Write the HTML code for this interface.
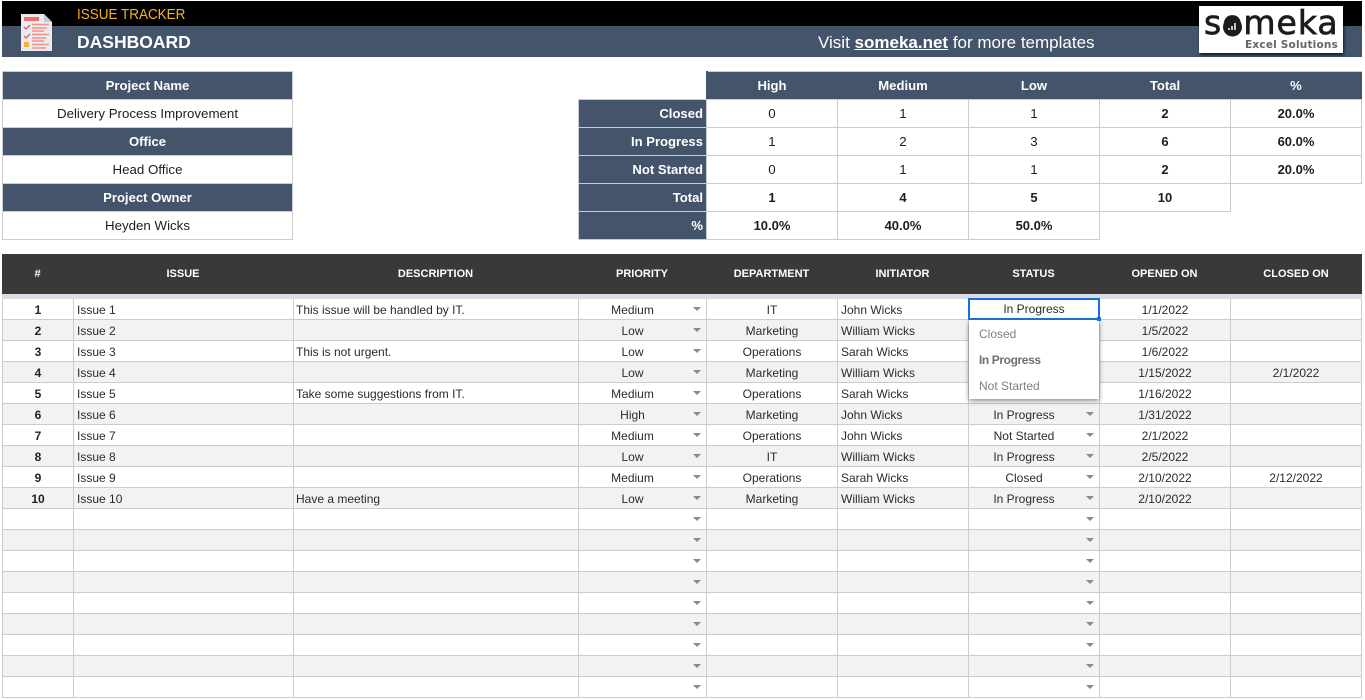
<!DOCTYPE html>
<html><head><meta charset="utf-8">
<style>
html,body{margin:0;padding:0;background:#fff;width:1365px;height:700px;overflow:hidden;font-family:"Liberation Sans",sans-serif;color:#222}
.a{position:absolute}
table{border-collapse:collapse;table-layout:fixed;position:absolute}
td{padding:0;border:1px solid #ccc;text-align:center;overflow:hidden;white-space:nowrap;box-sizing:border-box}
.top td{height:28px;font-size:13.3px;color:#1d1d1d}
.top td.h{background:#44546a;color:#fff;font-weight:bold;font-size:13.1px;border-color:#c9ced6}
.top td.r{text-align:right;padding-right:3px}
.top td.b{font-weight:bold;font-size:13px}
.top td.n{border:none;background:#fff}
.data{left:2px;top:298px}
.data td{height:21px;font-size:12px;line-height:18px;padding-top:2px;color:#2b2b2b}
.data tr:nth-child(even) td{background:#f2f2f2}
.data td.l{text-align:left;padding-left:3px}
.data td.p{text-align:left;padding-left:2px}
.data td.b{font-weight:bold;color:#222}
.data td.d{position:relative;padding-right:20px}
.data td.d:after{content:"";position:absolute;right:5px;top:8px;border-left:4.5px solid transparent;border-right:4.5px solid transparent;border-top:4px solid #8a8a8a}
.hd{position:absolute;top:254px;height:40px;line-height:41px;font-size:11px;font-weight:bold;color:#fff;text-align:center}
</style></head>
<body>
<div class="a" style="left:2px;top:1px;width:1360px;height:25px;background:#000"></div>
<div class="a" style="left:2px;top:26px;width:1360px;height:31px;background:#44546a"></div>
<svg class="a" style="left:20px;top:13px" width="33" height="39" viewBox="0 0 33 39">
<path d="M1 1H24L32 9V38H1Z" fill="#e8ebf0"/><path d="M24 1L32 9H24Z" fill="#c3c9d3"/>
<rect x="4" y="4" width="15" height="4" fill="#f0706a"/>
<path d="M4 14l2 2 4-4M4 23l2 2 4-4" stroke="#ee5f5a" stroke-width="1.4" fill="none"/>
<path d="M12 11.500H29M12 15H27M12 18H24M12 21.500H29M12 25H26M12 28H24M12 31.500H29M12 35H26" stroke="#f4918c" stroke-width="1.500"/>
<rect x="4" y="29" width="5" height="5" fill="#f6b13f"/>
</svg>
<div class="a" style="left:77px;top:6px;font-size:14.500px;line-height:18px;color:#f5b21c;transform:scaleX(.93);transform-origin:0 0;white-space:nowrap">ISSUE TRACKER</div>
<div class="a" style="left:77px;top:32px;font-size:17.500px;line-height:21px;font-weight:bold;color:#fff">DASHBOARD</div>
<div class="a" style="left:818px;top:32px;font-size:17px;line-height:21px;color:#fff;white-space:nowrap">Visit <b style="text-decoration:underline">someka.net</b> for more templates</div>
<div class="a" style="left:1199px;top:6px;width:144px;height:47px;background:#fff;box-shadow:1px 2px 3px rgba(0,0,0,.7)">
<div class="a" style="left:5px;top:-1px;font:33px/36px 'DejaVu Sans',sans-serif;color:#1c1c1c;letter-spacing:1px;-webkit-text-stroke:.7px #1c1c1c;white-space:nowrap">someka</div>
<svg class="a" style="left:23px;top:11px" width="21" height="20" viewBox="0 0 21 20"><circle cx="10.500" cy="10" r="9.500" fill="#1c1c1c"/><path d="M7 13V11M10 13V9M13 13V6" stroke="#fff" stroke-width="1.500"/></svg>
<div class="a" style="right:5px;top:33px;font:bold 10.500px/13px 'DejaVu Sans',sans-serif;color:#666;white-space:nowrap;letter-spacing:.2px">Excel Solutions</div>
</div>

<table class="top" style="left:2px;top:71px;width:291px">
<tr><td class="h">Project Name</td></tr>
<tr><td>Delivery Process Improvement</td></tr>
<tr><td class="h">Office</td></tr>
<tr><td>Head Office</td></tr>
<tr><td class="h">Project Owner</td></tr>
<tr><td>Heyden Wicks</td></tr>
</table>

<table class="top" style="left:578px;top:71px;width:783px">
<col style="width:128px"><col style="width:131px"><col style="width:131px"><col style="width:131px"><col style="width:131px"><col style="width:131px">
<tr><td class="n"></td><td class="h" style="border-left:none;border-right:none">High</td><td class="h" style="border-left:none;border-right:none">Medium</td><td class="h" style="border-left:none;border-right:none">Low</td><td class="h" style="border-left:none;border-right:none">Total</td><td class="h" style="border-left:none;border-right:none">%</td></tr>
<tr><td class="h r">Closed</td><td>0</td><td>1</td><td>1</td><td class="b">2</td><td class="b">20.0%</td></tr>
<tr><td class="h r">In Progress</td><td>1</td><td>2</td><td>3</td><td class="b">6</td><td class="b">60.0%</td></tr>
<tr><td class="h r">Not Started</td><td>0</td><td>1</td><td>1</td><td class="b">2</td><td class="b">20.0%</td></tr>
<tr><td class="h r">Total</td><td class="b">1</td><td class="b">4</td><td class="b">5</td><td class="b">10</td><td class="n"></td></tr>
<tr><td class="h r">%</td><td class="b">10.0%</td><td class="b">40.0%</td><td class="b">50.0%</td><td class="n"></td><td class="n"></td></tr>
</table>
<div class="a" style="left:706px;top:71px;width:2px;height:28px;background:#44546a"></div>

<div class="a" style="left:2px;top:254px;width:1360px;height:40px;background:#3b3838"></div>
<div class="hd" style="left:2px;width:71px">#</div>
<div class="hd" style="left:73px;width:220px">ISSUE</div>
<div class="hd" style="left:293px;width:285px">DESCRIPTION</div>
<div class="hd" style="left:578px;width:128px">PRIORITY</div>
<div class="hd" style="left:706px;width:131px">DEPARTMENT</div>
<div class="hd" style="left:837px;width:131px">INITIATOR</div>
<div class="hd" style="left:968px;width:131px">STATUS</div>
<div class="hd" style="left:1099px;width:131px">OPENED ON</div>
<div class="hd" style="left:1230px;width:132px">CLOSED ON</div>

<table class="data" style="width:1359px">
<col style="width:71px"><col style="width:220px"><col style="width:285px"><col style="width:128px"><col style="width:131px"><col style="width:131px"><col style="width:131px"><col style="width:131px"><col style="width:131px">
<tr><td class="b">1</td><td class="l">Issue 1</td><td class="p">This issue will be handled by IT.</td><td class="d">Medium</td><td>IT</td><td class="l">John Wicks</td><td class="d">In Progress</td><td>1/1/2022</td><td></td></tr>
<tr><td class="b">2</td><td class="l">Issue 2</td><td class="p"></td><td class="d">Low</td><td>Marketing</td><td class="l">William Wicks</td><td class="d"></td><td>1/5/2022</td><td></td></tr>
<tr><td class="b">3</td><td class="l">Issue 3</td><td class="p">This is not urgent.</td><td class="d">Low</td><td>Operations</td><td class="l">Sarah Wicks</td><td class="d"></td><td>1/6/2022</td><td></td></tr>
<tr><td class="b">4</td><td class="l">Issue 4</td><td class="p"></td><td class="d">Low</td><td>Marketing</td><td class="l">William Wicks</td><td class="d"></td><td>1/15/2022</td><td>2/1/2022</td></tr>
<tr><td class="b">5</td><td class="l">Issue 5</td><td class="p">Take some suggestions from IT.</td><td class="d">Medium</td><td>Operations</td><td class="l">Sarah Wicks</td><td class="d"></td><td>1/16/2022</td><td></td></tr>
<tr><td class="b">6</td><td class="l">Issue 6</td><td class="p"></td><td class="d">High</td><td>Marketing</td><td class="l">John Wicks</td><td class="d">In Progress</td><td>1/31/2022</td><td></td></tr>
<tr><td class="b">7</td><td class="l">Issue 7</td><td class="p"></td><td class="d">Medium</td><td>Operations</td><td class="l">John Wicks</td><td class="d">Not Started</td><td>2/1/2022</td><td></td></tr>
<tr><td class="b">8</td><td class="l">Issue 8</td><td class="p"></td><td class="d">Low</td><td>IT</td><td class="l">William Wicks</td><td class="d">In Progress</td><td>2/5/2022</td><td></td></tr>
<tr><td class="b">9</td><td class="l">Issue 9</td><td class="p"></td><td class="d">Medium</td><td>Operations</td><td class="l">Sarah Wicks</td><td class="d">Closed</td><td>2/10/2022</td><td>2/12/2022</td></tr>
<tr><td class="b">10</td><td class="l">Issue 10</td><td class="p">Have a meeting</td><td class="d">Low</td><td>Marketing</td><td class="l">William Wicks</td><td class="d">In Progress</td><td>2/10/2022</td><td></td></tr>
<tr><td></td><td></td><td></td><td class="d"></td><td></td><td></td><td class="d"></td><td></td><td></td></tr>
<tr><td></td><td></td><td></td><td class="d"></td><td></td><td></td><td class="d"></td><td></td><td></td></tr>
<tr><td></td><td></td><td></td><td class="d"></td><td></td><td></td><td class="d"></td><td></td><td></td></tr>
<tr><td></td><td></td><td></td><td class="d"></td><td></td><td></td><td class="d"></td><td></td><td></td></tr>
<tr><td></td><td></td><td></td><td class="d"></td><td></td><td></td><td class="d"></td><td></td><td></td></tr>
<tr><td></td><td></td><td></td><td class="d"></td><td></td><td></td><td class="d"></td><td></td><td></td></tr>
<tr><td></td><td></td><td></td><td class="d"></td><td></td><td></td><td class="d"></td><td></td><td></td></tr>
<tr><td></td><td></td><td></td><td class="d"></td><td></td><td></td><td class="d"></td><td></td><td></td></tr>
<tr><td></td><td></td><td></td><td class="d"></td><td></td><td></td><td class="d"></td><td></td><td></td></tr>
</table>
<div class="a" style="left:2px;top:294px;width:1360px;height:5px;background:#d9dee5"></div>

<div class="a" style="left:969px;top:320px;width:130px;height:79px;background:#fff;box-shadow:0 2px 5px rgba(0,0,0,.45)"></div>
<div class="a" style="left:968px;top:298px;width:128px;height:18px;border:2px solid #1a6fd4;background:#fff;font-size:12px;line-height:19px;text-align:center;color:#2b2b2b">In Progress</div>
<div class="a" style="left:1097px;top:317px;width:4px;height:4px;background:#1a6fd4"></div>
<div class="a" style="left:979px;top:326px;font-size:12px;line-height:16px;color:#808080">Closed</div>
<div class="a" style="left:979px;top:352px;font-size:12px;line-height:16px;color:#707070;font-weight:bold;letter-spacing:-.4px">In Progress</div>
<div class="a" style="left:979px;top:378px;font-size:12px;line-height:16px;color:#808080">Not Started</div>
</body></html>
